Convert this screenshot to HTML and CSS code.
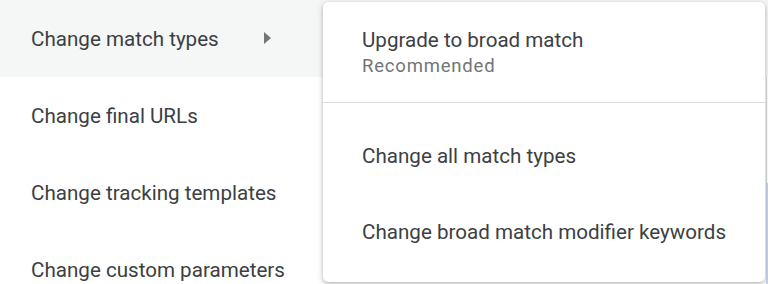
FILE: index.html
```html
<!DOCTYPE html>
<html>
<head>
<meta charset="utf-8">
<link rel="stylesheet" href="styles.css">
</head>
<body>
<div class="page">
  <div class="backdrop">
    <div class="topbar"></div>
    <div class="chip"></div>
    <div class="edge"></div>
    <div class="edge-mark"></div>
    <div class="edge-blue"></div>
  </div>
  <ul class="menu">
    <li class="item active">
      <span>Change match types</span>
      <svg class="caret" width="9" height="14" viewBox="0 0 9 14"><path d="M1 1 L8 7 L1 13 Z" fill="#757575"/></svg>
    </li>
    <li class="item"><span>Change final URLs</span></li>
    <li class="item"><span>Change tracking templates</span></li>
    <li class="item"><span>Change custom parameters</span></li>
  </ul>
  <div class="submenu">
    <div class="sub-item first">
      <div class="title">Upgrade to broad match</div>
      <div class="hint">Recommended</div>
    </div>
    <div class="divider"></div>
    <div class="sub-list">
      <div class="sub-item">Change all match types</div>
      <div class="sub-item">Change broad match modifier keywords</div>
    </div>
  </div>
</div>
</body>
</html>
```

FILE: styles.css
```css
* { box-sizing: border-box; }
html, body {
  margin: 0;
  padding: 0;
  background: #fff;
  overflow: hidden;
}
body {
  font-family: Roboto, "Noto Sans", Arial, sans-serif;
  color: #3c4043;
}
.page {
  position: relative;
  width: 768px;
  height: 284px;
  overflow: hidden;
}
.backdrop {
  position: absolute;
  inset: 0;
}
.topbar {
  position: absolute;
  left: 340px;
  right: 0;
  top: 0;
  height: 3px;
  background: #3c78d8;
}
.chip {
  position: absolute;
  left: 326px;
  top: 0;
  width: 12px;
  height: 3px;
  background: #777;
}
.edge {
  position: absolute;
  left: 766px;
  top: 3px;
  width: 1px;
  bottom: 0;
  background: #e0e0e0;
}
.edge-mark {
  position: absolute;
  left: 766px;
  top: 43px;
  width: 2px;
  height: 10px;
  background: #555;
}
.edge-blue {
  position: absolute;
  left: 766px;
  top: 183px;
  width: 2px;
  bottom: 0;
  background: #c9d4e8;
}
.menu {
  list-style: none;
  margin: 0;
  padding: 0;
  width: 768px;
  position: relative;
}
.item {
  height: 77px;
  display: flex;
  align-items: center;
  padding-left: 31px;
  font-size: 20.6px;
  color: #3c4043;
}
.item.active {
  background: #f5f6f6;
}
.caret {
  margin-left: 44px;
  margin-top: -1px;
}
.submenu {
  position: absolute;
  left: 323px;
  top: 2px;
  width: 442px;
  height: 280px;
  background: #fff;
  border-radius: 5px;
  box-shadow: 0 2px 6px rgba(60, 64, 67, 0.25), 0 1px 3px rgba(60, 64, 67, 0.2);
  display: flex;
  flex-direction: column;
}
.sub-item {
  padding-left: 39px;
  font-size: 20.6px;
  height: 76px;
  display: flex;
  align-items: center;
  color: #3c4043;
}
.sub-item.first {
  height: 100px;
  flex-direction: column;
  align-items: flex-start;
  justify-content: center;
  padding-top: 0;
  padding-bottom: 0;
}
.title {
  font-size: 20.6px;
  line-height: 26px;
}
.hint {
  font-size: 18.5px;
  line-height: 24px;
  letter-spacing: 0.8px;
  color: #70757a;
  margin-top: 1px;
}
.divider {
  height: 1px;
  background: #dadce0;
}
.sub-list {
  padding-top: 15px;
}
```
